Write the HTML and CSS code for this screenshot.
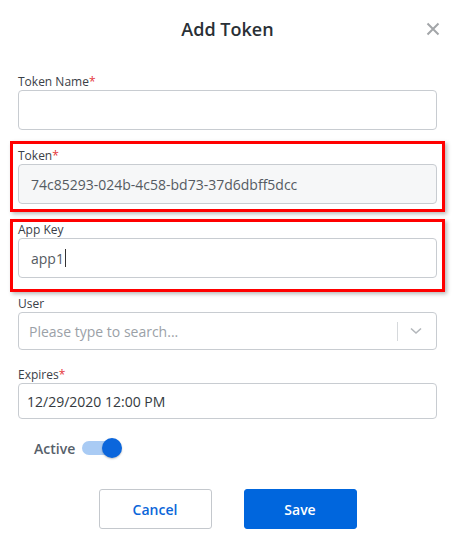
FILE: index.html
```html
<!DOCTYPE html>
<html lang="en">
<head>
<meta charset="utf-8">
<title>Add Token</title>
<link rel="stylesheet" href="styles.css">
</head>
<body>
<div class="modal">
  <div class="header">
    <h1 class="title">Add Token</h1>
    <button class="close" aria-label="Close">
      <svg width="14" height="14" viewBox="0 0 14 14"><path d="M1.5 1.5 L12.5 12.5 M12.5 1.5 L1.5 12.5" stroke="#a3a6a9" stroke-width="2" fill="none"/></svg>
    </button>
  </div>
  <form class="form">
    <div class="field field-first">
      <label class="label">Token Name<span class="req">*</span></label>
      <div class="input"></div>
    </div>
    <div class="highlight hl-1">
      <label class="label">Token<span class="req">*</span></label>
      <div class="input input-disabled"><span class="val">74c85293-024b-4c58-bd73-37d6dbff5dcc</span></div>
    </div>
    <div class="highlight hl-2">
      <label class="label">App Key</label>
      <div class="input"><span class="val">app1</span><span class="caret"></span></div>
    </div>
    <div class="field field-user">
      <label class="label">User</label>
      <div class="input select">
        <span class="placeholder">Please type to search...</span>
        <span class="sep"></span>
        <svg class="chev" width="12" height="8" viewBox="0 0 12 8"><path d="M1 1.5 L6 6 L11 1.5" stroke="#b3b7bb" stroke-width="1.6" fill="none"/></svg>
      </div>
    </div>
    <div class="field field-exp">
      <label class="label">Expires<span class="req">*</span></label>
      <div class="input input-date"><span class="val dark">12/29/2020 12:00 PM</span></div>
    </div>
    <div class="active-row">
      <span class="active-label">Active</span>
      <span class="toggle"><span class="track"></span><span class="knob"></span></span>
    </div>
    <div class="actions">
      <button type="button" class="btn btn-cancel">Cancel</button>
      <button type="button" class="btn btn-save">Save</button>
    </div>
  </form>
</div>
</body>
</html>
```

FILE: styles.css
```css
* { box-sizing: border-box; }
html, body { margin: 0; padding: 0; background: #fff; }
body {
  font-family: "Open Sans", "Noto Sans", "Liberation Sans", sans-serif;
  color: #30363c;
  width: 460px;
  height: 542px;
  overflow: hidden;
}
.modal { width: 460px; }
.header {
  position: relative;
  height: 58px;
  display: flex;
  align-items: center;
  justify-content: center;
  padding: 0 23px 0 18px;
}
.title {
  margin: 0;
  font-size: 18px;
  font-weight: 600;
  color: #2a3036;
  line-height: 24px;
}
.close {
  position: absolute;
  right: 20px;
  top: 22px;
  width: 14px;
  height: 14px;
  padding: 0;
  border: 0;
  background: none;
  display: flex;
}
.form {
  padding: 16px 23px 0 18px;
  display: flex;
  flex-direction: column;
}
.label {
  display: block;
  font-size: 12px;
  line-height: 16px;
  color: #3a4047;
  height: 16px;
}
.req { color: #e5363b; }
.input {
  height: 40px;
  border: 1px solid #c8ccd1;
  border-radius: 4px;
  background: #fff;
  display: flex;
  align-items: center;
  padding: 0 12px;
  font-size: 14px;
  color: #555b62;
}
.input-disabled { background: #f6f7f8; }
.val { white-space: nowrap; }
.val.dark { color: #343a40; }
.caret {
  display: inline-block;
  width: 1px;
  height: 18px;
  background: #333;
  margin-left: 1px;
}
.field-first { margin-bottom: 11px; }
.highlight {
  margin: 0 -8px;
  border: 3px solid #ff0000;
  box-shadow: 2px 2px 4px rgba(0, 0, 0, 0.28);
  padding: 4px 5px 5px;
}
.hl-1 { margin-bottom: 7px; }
.hl-2 { padding: 0 5px 11px; margin-bottom: 4px; }
.field-user { margin-bottom: 17px; }
.select {
  height: 38px;
  padding: 0 0 0 10px;
}
.placeholder { color: #9ba1a7; flex: 1; }
.sep {
  width: 1px;
  height: 19px;
  background: #d6d9dc;
  margin-right: 12px;
}
.chev { margin-right: 14px; }
.input-date { height: 36px; padding-left: 8px; }
.active-row {
  display: flex;
  align-items: center;
  height: 22px;
  margin-top: 18px;
  padding-left: 16px;
  gap: 7px;
}
.active-label {
  font-size: 14px;
  font-weight: 600;
  color: #56606a;
}
.toggle {
  position: relative;
  width: 40px;
  height: 22px;
  display: flex;
  align-items: center;
}
.track {
  width: 30px;
  height: 14px;
  border-radius: 7px;
  background: #a9cbf4;
}
.knob {
  position: absolute;
  left: 20px;
  top: 1px;
  width: 20px;
  height: 20px;
  border-radius: 50%;
  background: #0b66dc;
  box-shadow: 0 1px 2px rgba(0, 0, 0, 0.25);
}
.actions {
  display: flex;
  justify-content: center;
  gap: 32px;
  margin-top: 30px;
}
.btn {
  width: 113px;
  height: 40px;
  border-radius: 3px;
  font-family: "Open Sans", "Noto Sans", sans-serif;
  font-size: 14px;
  font-weight: 600;
  cursor: pointer;
}
.btn-cancel {
  background: #fff;
  border: 1px solid #c4c8cd;
  color: #0b66d9;
}
.btn-save {
  background: #0066dd;
  border: 1px solid #0066dd;
  color: #fff;
}
```
